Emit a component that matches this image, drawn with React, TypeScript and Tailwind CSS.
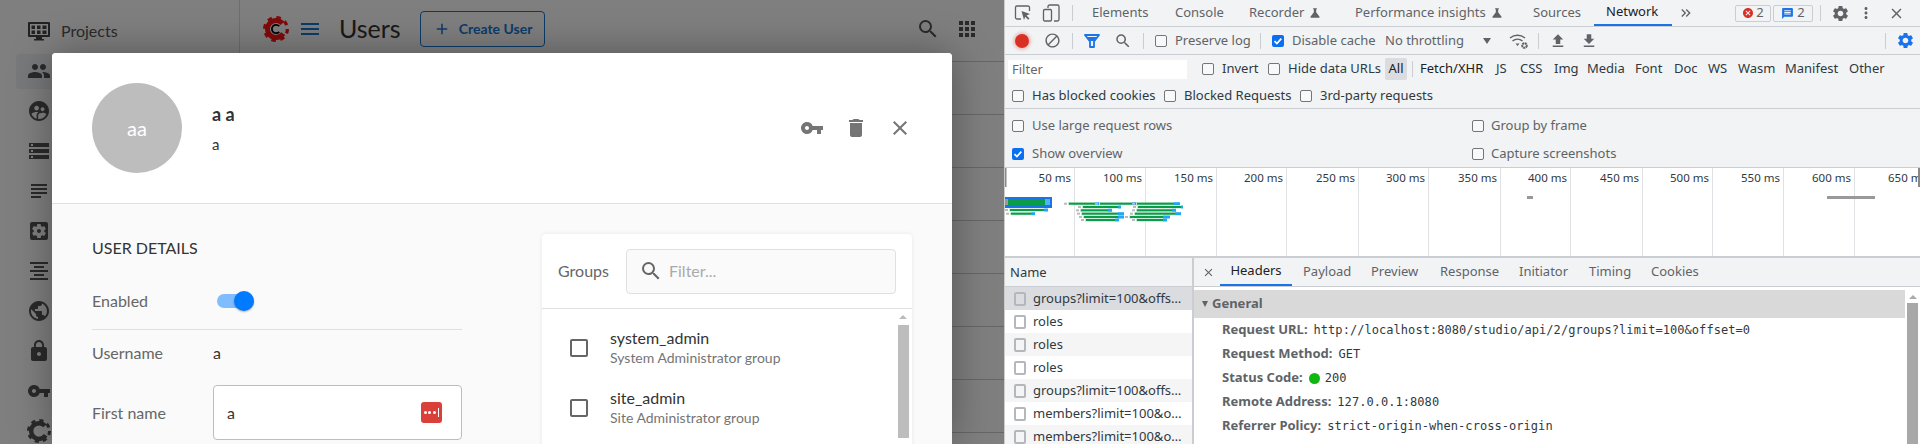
import {
  MdAdd,
  MdApps,
  MdBlock,
  MdCancel,
  MdCheckBoxOutlineBlank,
  MdClose,
  MdDelete,
  MdFileDownload,
  MdFileUpload,
  MdFormatAlignCenter,
  MdKeyboardDoubleArrowRight,
  MdLock,
  MdMenu,
  MdMessage,
  MdMoreVert,
  MdPeople,
  MdPublic,
  MdScience,
  MdSearch,
  MdSettings,
  MdSettingsApplications,
  MdStorage,
  MdSubject,
  MdSupervisedUserCircle,
  MdVpnKey,
} from "react-icons/md";

const appFont = "font-['Lato','Noto_Sans',sans-serif]";
const toolFont = "font-['Noto_Sans',sans-serif]";
const monoFont = "font-['DejaVu_Sans_Mono',monospace]";

function GearLogo({ gear, letter }: { gear: string; letter: string }) {
  return (
    <svg viewBox="0 0 32 32" className="w-full h-full">
      <circle cx="16" cy="16" r="10.5" fill="none" stroke={gear} strokeWidth="6" strokeDasharray="52 14" strokeDashoffset="-6" />
      <circle cx="16" cy="16" r="14" fill="none" stroke={gear} strokeWidth="4" strokeDasharray="5.5 5.5" />
      <path d="M20 12.5a5.2 5.2 0 1 0 0 7" fill="none" stroke={letter} strokeWidth="2.2" />
    </svg>
  );
}

function ProjectsIcon() {
  return (
    <svg viewBox="0 0 24 24" className="w-[24px] h-[24px]" fill="#444">
      <path d="M2 3h20a1 1 0 0 1 1 1v13a1 1 0 0 1-1 1h-7v2h2v1.5H7V20h2v-2H2a1 1 0 0 1-1-1V4a1 1 0 0 1 1-1zm1 2v11h18V5H3z" />
      <path d="M4.5 6.5h3.5v3.5H4.5zM10 6.5h3.5v3.5H10zM15.500 6.500H19.500v3.500H15.500zM4.500 11.500h3.500v3.500H4.500zM10 11.500h3.500v3.500H10zM15.500 11.500H19.500v3.500H15.500z" />
    </svg>
  );
}

function InspectIcon() {
  return (
    <svg viewBox="0 0 18 18" className="w-[18px] h-[18px]">
      <path d="M7 15H3a1.500 1.500 0 0 1-1.500-1.500v-10A1.500 1.500 0 0 1 3 2h11a1.500 1.500 0 0 1 1.500 1.500V7" fill="none" stroke="#5f6368" strokeWidth="1.300" />
      <path d="M7.500 7l8.500 3-3.500 1.500 3 3-1.300 1.300-3-3L10 16z" fill="#5f6368" />
    </svg>
  );
}

function DeviceIcon() {
  return (
    <svg viewBox="0 0 18 18" className="w-[18px] h-[18px]" fill="none" stroke="#5f6368" strokeWidth="1.300">
      <path d="M6 4V2.500A1.500 1.500 0 0 1 7.500 1h8A1.500 1.500 0 0 1 17 2.500v13a1.500 1.500 0 0 1-1.500 1.500H12" />
      <rect x="1.500" y="5.500" width="8" height="11.500" rx="1.200" />
    </svg>
  );
}

function FunnelIcon() {
  return (
    <svg viewBox="0 0 16 14" className="w-[16px] h-[14px]">
      <path d="M1 1h14L10 7.500V13H6V7.500z" fill="none" stroke="#1a73e8" strokeWidth="1.800" strokeLinejoin="round" />
      <path d="M3 3h10L9.500 7H6.500z" fill="#1a73e8" />
    </svg>
  );
}

function WifiIcon() {
  return (
    <svg viewBox="0 0 20 18" className="w-[20px] h-[18px]" fill="none" stroke="#5f6368" strokeWidth="1.500">
      <path d="M1 6a12 12 0 0 1 15 0M3.500 9a8 8 0 0 1 10 0" />
      <path d="M6.500 11.500h4l-2 2.500z" fill="#5f6368" stroke="none" />
      <circle cx="15.500" cy="13.500" r="2.300" strokeWidth="2" strokeDasharray="2 0.500" />
    </svg>
  );
}

function Box({ checked = false }: { checked?: boolean }) {
  if (checked) {
    return (
      <span className="w-[12px] h-[12px] rounded-[2px] bg-[#0b6ff2] flex items-center justify-center shrink-0">
        <svg viewBox="0 0 12 12" className="w-[12px] h-[12px]">
          <path d="M2.500 6.200l2.400 2.400 4.400-5" fill="none" stroke="#fff" strokeWidth="1.700" />
        </svg>
      </span>
    );
  }
  return <span className="block w-[12px] h-[12px] rounded-[2px] border border-[#767676] bg-[#f8f9fa] shrink-0" />;
}

const tableRows = [0, 1, 2, 3, 4, 5, 6, 7];

const navIcons = [
  MdSupervisedUserCircle,
  MdStorage,
  MdSubject,
  MdSettingsApplications,
  MdFormatAlignCenter,
  MdPublic,
  MdLock,
  MdVpnKey,
];

function AppBehind() {
  return (
    <div className={`flex w-[1004px] h-[444px] bg-white ${appFont}`}>
      <div className="w-[240px] shrink-0 border-r border-[#ddd] h-[53px] overflow-visible">
        <div className="flex items-center h-[51px] pl-[27px] pt-[10px] gap-[10px]">
          <ProjectsIcon />
          <span className="text-[16px] text-[#555]">Projects</span>
        </div>
        <div className="pl-[16px] w-[239px]">
          <div className="h-[40px] flex items-center">
            <div className="w-[100px] h-[35px] rounded-[4px] bg-[#eef2f6] pl-[11px] flex items-center">
              <MdPeople size={24} color="#555" />
            </div>
          </div>
          {navIcons.map((Icon, i) => (
            <div key={i} className="h-[40px] pl-[11px] flex items-center">
              <Icon size={24} color="#555" />
            </div>
          ))}
          <div className="h-[40px] pl-[11px] flex items-center">
            <div className="w-[24px] h-[24px]">
              <GearLogo gear="#555" letter="#fff" />
            </div>
          </div>
        </div>
      </div>
      <div className="flex-1 min-w-0">
        <div className="flex items-center h-[57px] pl-[23px] pr-[25px]">
          <div className="w-[26px] h-[32px] flex items-center">
            <GearLogo gear="#ff1414" letter="#000" />
          </div>
          <MdMenu size={24} color="#1976d2" className="ml-[9px]" />
          <span className="ml-[17px] text-[25px] text-[#333] leading-none">Users</span>
          <button className="ml-[19px] w-[125px] h-[36px] border border-[#1976d2] rounded-[4px] flex items-center pl-[12px] gap-[8px] text-[14px] font-bold text-[#1976d2]">
            <MdAdd size={18} />
            Create User
          </button>
          <MdSearch size={24} color="#555" className="ml-auto" />
          <MdApps size={24} color="#555" className="ml-[15px]" />
        </div>
        <div className="h-[4px]" />
        {tableRows.map((r) => (
          <div key={r} className="h-[53px] border-t border-[#ccc] first:h-[55px]" />
        ))}
      </div>
    </div>
  );
}

function GroupRow({ name, desc }: { name: string; desc: string }) {
  return (
    <div className="flex items-center h-[60px] pl-[25px]">
      <MdCheckBoxOutlineBlank size={24} color="#666" />
      <div className="ml-[19px]">
        <div className="text-[16px] leading-[20px] text-[#333]">{name}</div>
        <div className="text-[14px] leading-[20px] text-[#757575]">{desc}</div>
      </div>
    </div>
  );
}

function UserDialog() {
  return (
    <div className={`absolute left-[52px] top-[53px] w-[900px] h-[391px] rounded-t-[4px] bg-[#fafafa] overflow-hidden shadow-[0_0_40px_rgba(0,0,0,0.35)] ${appFont}`}>
      <div className="flex items-center h-[151px] bg-white border-b border-[#e0e0e0] pl-[40px] pr-[40px]">
        <div className="w-[90px] h-[90px] rounded-full bg-[#bdbdbd] flex items-center justify-center text-[20px] text-white">aa</div>
        <div className="ml-[30px]">
          <div className="text-[18px] font-bold text-[#333] leading-[24px]">a a</div>
          <div className="text-[15px] text-[#333] leading-[20px] mt-[8px]">a</div>
        </div>
        <div className="ml-auto flex items-center gap-[20px] text-[#757575]">
          <MdVpnKey size={24} />
          <MdDelete size={24} />
          <MdClose size={24} />
        </div>
      </div>
      <div className="flex px-[40px] pt-[30px] gap-[80px]">
        <div className="w-[370px]">
          <div className="h-[28px] text-[16px] leading-[28px] text-[#333]">USER DETAILS</div>
          <div className="flex items-center h-[58px] mt-[10px] border-b border-[#e0e0e0]">
            <span className="w-[125px] text-[16px] text-[#666]">Enabled</span>
            <span className="relative w-[37px] h-[14px] rounded-full bg-[#80bdff]">
              <span className="absolute right-0 -top-[3px] w-[20px] h-[20px] rounded-full bg-[#007bff] shadow-[0_1px_2px_rgba(0,0,0,0.3)]" />
            </span>
          </div>
          <div className="flex items-center h-[45px]">
            <span className="w-[121px] text-[16px] text-[#666]">Username</span>
            <span className="text-[16px] text-[#333]">a</span>
          </div>
          <div className="flex items-center mt-[10px]">
            <span className="w-[121px] text-[16px] text-[#666]">First name</span>
            <div className="flex items-center w-[249px] h-[55px] rounded-[4px] border border-[#bdbdbd] bg-white pl-[13px] pr-[19px] text-[16px] text-[#333]">
              a
              <span className="ml-auto w-[21px] h-[21px] rounded-[3px] bg-[#db3f3a] flex items-center justify-center gap-[1.500px]">
                <span className="w-[3px] h-[3px] rounded-full bg-white" />
                <span className="w-[3px] h-[3px] rounded-full bg-white" />
                <span className="w-[3px] h-[3px] rounded-full bg-white" />
                <span className="w-px h-[9px] bg-white ml-[1px]" />
              </span>
            </div>
          </div>
        </div>
        <div className="w-[370px] h-[300px] rounded-[4px] bg-white shadow-[0_0_4px_rgba(0,0,0,0.08)]">
          <div className="flex items-center h-[75px] border-b border-[#e0e0e0] pl-[16px] pr-[16px]">
            <span className="w-[68px] text-[16px] text-[#666]">Groups</span>
            <div className="flex items-center flex-1 h-[45px] rounded-[4px] border border-[#e0e0e0] bg-[#fafafa] pl-[12px] gap-[6px]">
              <MdSearch size={24} color="#666" />
              <span className="text-[16px] text-[#aaa]">Filter...</span>
            </div>
          </div>
          <div className="flex">
            <div className="flex-1 pt-[9px]">
              <GroupRow name="system_admin" desc="System Administrator group" />
              <GroupRow name="site_admin" desc="Site Administrator group" />
            </div>
            <div className="w-[14px] mr-[2px] flex flex-col items-center">
              <div className="h-[16px] flex items-center">
                <span className="w-0 h-0 border-x-[4px] border-x-transparent border-b-[4px] border-b-[#bbb]" />
              </div>
              <div className="w-[11px] flex-1 bg-[#bdbdbd]" />
            </div>
          </div>
        </div>
      </div>
    </div>
  );
}

const ticks = [
  { w: "w-[70px]", t: "50 ms" },
  { w: "w-[71px]", t: "100 ms" },
  { w: "w-[71px]", t: "150 ms" },
  { w: "w-[70px]", t: "200 ms" },
  { w: "w-[72px]", t: "250 ms" },
  { w: "w-[70px]", t: "300 ms" },
  { w: "w-[72px]", t: "350 ms" },
  { w: "w-[70px]", t: "400 ms" },
  { w: "w-[72px]", t: "450 ms" },
  { w: "w-[70px]", t: "500 ms" },
  { w: "w-[71px]", t: "550 ms" },
  { w: "w-[71px]", t: "600 ms" },
];

// x1, x2 of the green part, x3 end of the blue tail, y
const overviewBars = [
  [1010, 1044, 1048, 211],
  [1011, 1031, 1035, 214.7],
  [1069, 1095, 1099, 204.7],
  [1100, 1132, 1137, 204.7],
  [1137, 1174, 1180, 204.7],
  [1083, 1118, 1121, 208],
  [1138, 1181, 1183, 208],
  [1081, 1108, 1112, 211.3],
  [1137, 1172, 1176, 211.3],
  [1082, 1118, 1124, 214.7],
  [1135, 1175, 1181, 214.7],
  [1084, 1118, 1124, 218],
  [1130, 1163, 1170, 218],
  [1086, 1115, 1119, 221],
  [1137, 1163, 1167, 221],
];

function Overview() {
  return (
    <svg className="absolute -left-px top-0 w-[916px] h-[87px]" viewBox="1004 169 916 87">
      <rect x="1004" y="198" width="48" height="11" fill="#1a73e8" />
      <rect x="1007" y="200" width="43" height="6" fill="#4fb3f6" />
      <rect x="1008" y="200" width="37" height="6" fill="#0b9c4a" />
      <rect x="1005" y="200" width="2" height="6" fill="#999" />
      {overviewBars.map(([a, b, c, y]) => (
        <g key={`${a}-${y}`}>
          <rect x={a - 5} y={y - 1} width="3" height="2" fill="#bbb" />
          <rect x={a - 1} y={y - 1.500} width={b - a + 1} height="3" fill="#bfe6cf" />
          <rect x={a} y={y - 1} width={b - a} height="2" fill="#0b9c4a" />
          <rect x={b} y={y - 1.500} width={c - b} height="3" fill="#1ea7f4" />
        </g>
      ))}
      <rect x="1527" y="197" width="6" height="3" fill="#999" />
      <rect x="1827" y="197" width="48" height="3" fill="#999" />
      <rect x="1005" y="169" width="1.500" height="19" fill="#888" />
      <rect x="1918" y="169" width="2" height="19" fill="#888" />
    </svg>
  );
}

const nameRows = [
  { t: "groups?limit=100&offs…", c: "bg-[#dadce0]" },
  { t: "roles", c: "bg-white" },
  { t: "roles", c: "bg-[#f5f5f5]" },
  { t: "roles", c: "bg-white" },
  { t: "groups?limit=100&offs…", c: "bg-[#f5f5f5]" },
  { t: "members?limit=100&o…", c: "bg-white" },
  { t: "members?limit=100&o…", c: "bg-[#f5f5f5]" },
];

function HeaderRow({ label, children }: { label: string; children: React.ReactNode }) {
  return (
    <div className="flex items-center h-[24px] pl-[28px] whitespace-nowrap">
      <span className={`text-[13px] font-bold text-[#5f6368] ${toolFont}`}>{label}</span>
      <span className={`ml-[6px] flex items-center text-[12px] text-[#303942] tracking-[0.05px] ${monoFont}`}>{children}</span>
    </div>
  );
}

function DevTools() {
  return (
    <div className={`w-[916px] h-[444px] bg-[#f1f3f4] border-l border-[#ccc] text-[13px] text-[#5f6368] flex flex-col overflow-hidden ${toolFont}`}>
      <div className="flex items-center h-[27px] border-b border-[#cacdd1] shrink-0 whitespace-nowrap">
        <span className="ml-[9px]"><InspectIcon /></span>
        <span className="ml-[10px]"><DeviceIcon /></span>
        <span className="ml-[12px] w-px h-[16px] bg-[#cacdd1]" />
        <span className="ml-[19px] w-[83px]">Elements</span>
        <span className="w-[74px]">Console</span>
        <span className="w-[106px] flex items-center gap-[4px]">Recorder <MdScience size={14} /></span>
        <span className="w-[178px] flex items-center gap-[4px]">Performance insights <MdScience size={14} /></span>
        <span className="w-[61px]">Sources</span>
        <span className="w-[78px] h-full pl-[12px] flex items-center border-b-2 border-[#1a73e8] text-[#202124]">Network</span>
        <MdKeyboardDoubleArrowRight size={16} className="ml-[6px]" />
        <span className="ml-[41px] w-[36px] h-[17px] rounded-[2px] border border-[#cacdd1] flex items-center justify-center gap-[2px]">
          <MdCancel size={12} color="#d93025" /> 2
        </span>
        <span className="ml-[2px] w-[40px] h-[17px] rounded-[2px] border border-[#cacdd1] flex items-center justify-center gap-[3px]">
          <MdMessage size={13} color="#1a73e8" /> 2
        </span>
        <span className="ml-[7px] w-px h-[16px] bg-[#cacdd1]" />
        <MdSettings size={19} className="ml-[10px]" />
        <MdMoreVert size={18} className="ml-[7px]" />
        <MdClose size={17} className="ml-[13px]" />
      </div>
      <div className="flex items-center h-[28px] border-b border-[#cacdd1] shrink-0 whitespace-nowrap">
        <span className="ml-[10px] w-[14px] h-[14px] rounded-full bg-[#d93025] shadow-[0_0_3px_2px_rgba(217,48,37,0.25)]" />
        <MdBlock size={17} className="ml-[15px]" />
        <span className="ml-[11px] w-px h-[16px] bg-[#cacdd1]" />
        <span className="ml-[11px]"><FunnelIcon /></span>
        <MdSearch size={18} className="ml-[14px]" />
        <span className="ml-[11px] w-px h-[16px] bg-[#cacdd1]" />
        <span className="ml-[11px]"><Box /></span>
        <span className="ml-[8px] w-[85px]">Preserve log</span>
        <span className="w-px h-[16px] bg-[#cacdd1]" />
        <span className="ml-[11px]"><Box checked /></span>
        <span className="ml-[8px] w-[93px]">Disable cache</span>
        <span className="w-[98px]">No throttling</span>
        <span className="w-0 h-0 border-x-[4px] border-x-transparent border-t-[6px] border-t-[#5f6368]" />
        <span className="ml-[18px]"><WifiIcon /></span>
        <span className="ml-[9px] w-px h-[16px] bg-[#cacdd1]" />
        <MdFileUpload size={18} className="ml-[10px]" />
        <MdFileDownload size={18} className="ml-[13px]" />
        <span className="ml-[287px] w-px h-[16px] bg-[#cacdd1]" />
        <MdSettings size={19} color="#1a73e8" className="ml-[10px]" />
      </div>
      <div className="flex items-center h-[28px] shrink-0 whitespace-nowrap text-[#303942]">
        <span className="ml-[3px] w-[179px] h-[19px] bg-white pl-[4px] leading-[19px] text-[#666]">Filter</span>
        <span className="ml-[15px]"><Box /></span>
        <span className="ml-[8px] w-[46px]">Invert</span>
        <Box />
        <span className="ml-[8px] w-[97px]">Hide data URLs</span>
        <span className="w-[22px] h-[22px] rounded-[2px] bg-[#dadce0] flex items-center justify-center text-[#202124]">All</span>
        <span className="ml-[5px] w-px h-[16px] bg-[#cacdd1]" />
        <span className="ml-[7px] w-[76px] text-[#202124]">Fetch/XHR</span>
        <span className="w-[24px]">JS</span>
        <span className="w-[34px]">CSS</span>
        <span className="w-[33px]">Img</span>
        <span className="w-[48px]">Media</span>
        <span className="w-[39px]">Font</span>
        <span className="w-[34px]">Doc</span>
        <span className="w-[30px]">WS</span>
        <span className="w-[47px]">Wasm</span>
        <span className="w-[64px]">Manifest</span>
        <span>Other</span>
      </div>
      <div className="flex items-center h-[26px] border-b border-[#cacdd1] shrink-0 whitespace-nowrap text-[#303942]">
        <span className="ml-[7px]"><Box /></span>
        <span className="ml-[8px] w-[132px]">Has blocked cookies</span>
        <Box />
        <span className="ml-[8px] w-[116px]">Blocked Requests</span>
        <Box />
        <span className="ml-[8px]">3rd-party requests</span>
      </div>
      <div className="grid grid-cols-[467px_1fr] grid-rows-[29px_27px] h-[59px] pt-[2px] border-b border-[#cacdd1] shrink-0 whitespace-nowrap">
        <div className="flex items-center gap-[8px] pl-[7px]"><Box /> Use large request rows</div>
        <div className="flex items-center gap-[7px]"><Box /> Group by frame</div>
        <div className="flex items-center gap-[8px] pl-[7px]"><Box checked /> Show overview</div>
        <div className="flex items-center gap-[7px]"><Box /> Capture screenshots</div>
      </div>
      <div className="relative flex h-[90px] bg-white border-b-2 border-[#cacdd1] shrink-0 text-[11.5px] text-[#303942] whitespace-nowrap">
        {ticks.map((x) => (
          <div key={x.t} className={`${x.w} shrink-0 border-r border-[#dfe1e5] text-right pr-[3px] leading-[20px]`}>{x.t}</div>
        ))}
        <div className="pl-[33px] leading-[20px] shrink-0">650 ms</div>
        <Overview />
      </div>
      <div className="flex flex-1 min-h-0">
        <div className="w-[189px] shrink-0 border-r-2 border-[#cacdd1] bg-white">
          <div className="h-[29px] bg-[#f1f3f4] border-b border-[#cacdd1] pl-[5px] pt-[1px] flex items-center text-[#303942]">Name</div>
          {nameRows.map((r, i) => (
            <div key={i} className={`h-[23px] flex items-center pl-[9px] gap-[7px] whitespace-nowrap text-[#303942] ${r.c}`}>
              <span className="w-[12px] h-[14px] rounded-[2px] border-2 border-[#b4b7bb] shrink-0" />
              {r.t}
            </div>
          ))}
        </div>
        <div className="flex-1 min-w-0 bg-white flex flex-col">
          <div className="h-[29px] bg-[#f1f3f4] border-b border-[#cacdd1] flex items-center whitespace-nowrap shrink-0">
            <MdClose size={13} className="ml-[8px]" />
            <span className="ml-[5px] w-[72px] h-full flex items-center justify-center border-b-2 border-[#1a73e8] text-[#202124]">Headers</span>
            <span className="ml-[11px] w-[68px]">Payload</span>
            <span className="w-[69px]">Preview</span>
            <span className="w-[79px]">Response</span>
            <span className="w-[70px]">Initiator</span>
            <span className="w-[62px]">Timing</span>
            <span>Cookies</span>
          </div>
          <div className="flex flex-1 min-h-0">
            <div className="flex-1 min-w-0 pt-[3px]">
              <div className="h-[28px] bg-[#d9d9d9] flex items-center pl-[8px] gap-[4px] font-bold text-[#5f6368]">
                <span className="w-0 h-0 border-x-[3.500px] border-x-transparent border-t-[6px] border-t-[#5f6368]" />
                General
              </div>
              <HeaderRow label="Request URL:">http://localhost:8080/studio/api/2/groups?limit=100&amp;offset=0</HeaderRow>
              <HeaderRow label="Request Method:">GET</HeaderRow>
              <HeaderRow label="Status Code:">
                <span className="w-[11px] h-[11px] rounded-full bg-[#0fb80f] mr-[5px]" />
                200
              </HeaderRow>
              <HeaderRow label="Remote Address:">127.0.0.1:8080</HeaderRow>
              <HeaderRow label="Referrer Policy:">strict-origin-when-cross-origin</HeaderRow>
            </div>
            <div className="w-[15px] shrink-0 pt-[3px] flex flex-col items-center">
              <div className="h-[13px] flex items-center">
                <span className="w-0 h-0 border-x-[4px] border-x-transparent border-b-[4px] border-b-[#aaa]" />
              </div>
              <div className="w-[11px] flex-1 bg-[#a8a8a8]" />
            </div>
          </div>
        </div>
      </div>
    </div>
  );
}

export default function App() {
  return (
    <div className="flex w-[1920px] h-[444px] overflow-hidden">
      <div className="relative w-[1004px] h-[444px] shrink-0 overflow-hidden">
        <AppBehind />
        <div className="absolute inset-0 bg-black/50" />
        <UserDialog />
      </div>
      <DevTools />
    </div>
  );
}
